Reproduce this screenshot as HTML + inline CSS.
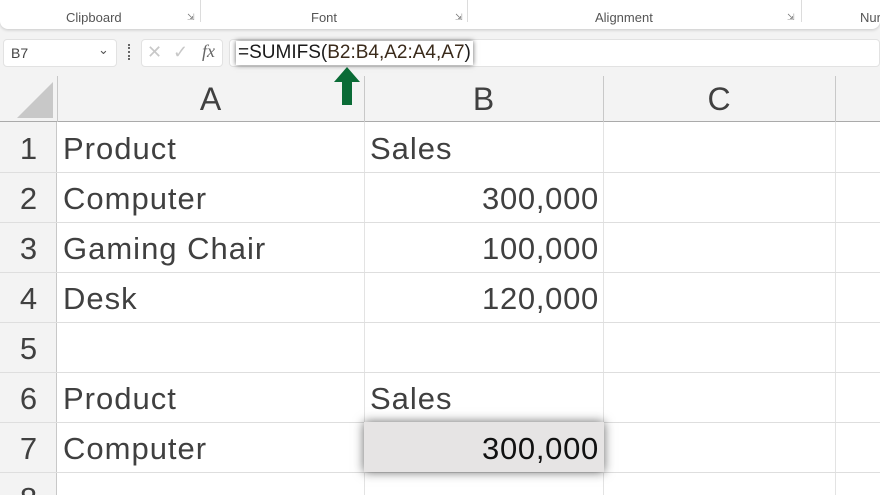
<!DOCTYPE html>
<html><head><style>
*{margin:0;padding:0;box-sizing:border-box}
html,body{width:880px;height:495px;overflow:hidden}
body{background:#f3f3f3;font-family:"Liberation Sans",sans-serif;position:relative;color:#404040}
.abs{position:absolute}
.rib{left:0;top:0;width:880px;height:29px;background:#fff;border-radius:0 0 8px 8px;box-shadow:0 1px 3px rgba(0,0,0,.18)}
.lbl{top:10px;font-size:13px;color:#555}
.sep{top:0;width:1px;height:22px;background:#dcdcdc}
.ln{font-size:9px;color:#777;top:12px}
.box{background:#fff;border:1px solid #e2e2e2;border-radius:4px}
.grid{left:0;top:122px;width:880px;height:373px;background:#fff}
.h{background:#dedede}
.v{background:#e3e3e3}
.cell{font-size:31px;color:#404040;height:50px;line-height:52px;letter-spacing:1px}
.rn{width:57px;text-align:center;font-size:31px;color:#404040;line-height:52px;height:50px;left:0;overflow:hidden}
.col{top:76px;height:46px;line-height:46px;text-align:center;font-size:32px;color:#404040}
</style></head><body>
<div class="abs rib"></div>
<div class="abs lbl" style="left:66px">Clipboard</div>
<div class="abs ln" style="left:187px">⇲</div>
<div class="abs sep" style="left:200px"></div>
<div class="abs lbl" style="left:311px">Font</div>
<div class="abs ln" style="left:455px">⇲</div>
<div class="abs sep" style="left:467px"></div>
<div class="abs lbl" style="left:595px">Alignment</div>
<div class="abs ln" style="left:787px">⇲</div>
<div class="abs sep" style="left:801px"></div>
<div class="abs lbl" style="left:860px;width:20px;overflow:hidden">Nur</div>

<div class="abs box" style="left:3px;top:39px;width:114px;height:28px"></div>
<div class="abs" style="left:11px;top:45px;font-size:14px;color:#444">B7</div>
<div class="abs" style="left:98px;top:42px;font-size:13px;color:#555">⌄</div>
<div class="abs" style="left:128px;top:44px;width:2px;height:16px;border-left:2px dotted #666"></div>
<div class="abs box" style="left:141px;top:39px;width:82px;height:28px"></div>
<div class="abs" style="left:147px;top:42px;font-size:18px;color:#c8c8c8">✕</div>
<div class="abs" style="left:173px;top:42px;font-size:18px;color:#c8c8c8">✓</div>
<div class="abs" style="left:202px;top:41px;font-size:18px;color:#666;font-family:'Liberation Serif',serif;font-style:italic">fx</div>
<div class="abs box" style="left:229px;top:39px;width:651px;height:28px"></div>
<div class="abs" style="left:236px;top:41px;height:24px;padding:0 2px;background:#fff;box-shadow:0 0 5px rgba(0,0,0,.6);font-size:19px;line-height:24px;color:#1a1a1a">=SUMIFS(<span style="color:#3a2a1a">B2:B4,A2:A4,A7</span>)</div>
<svg class="abs" style="left:332px;top:66px" width="30" height="40"><path d="M15 1 L28 16 L20 16 L20 39 L10 39 L10 16 L2 16 Z" fill="#0a6b36"/></svg>

<div class="abs" style="left:0;top:121px;width:880px;height:1px;background:#aaa"></div>
<svg class="abs" style="left:15px;top:80px" width="40" height="40"><path d="M38 2 L38 38 L2 38 Z" fill="#c8c8c8"/></svg>
<div class="abs" style="left:57px;top:76px;width:1px;height:46px;background:#c8c8c8"></div>
<div class="abs" style="left:364px;top:76px;width:1px;height:46px;background:#c8c8c8"></div>
<div class="abs" style="left:603px;top:76px;width:1px;height:46px;background:#c8c8c8"></div>
<div class="abs" style="left:835px;top:76px;width:1px;height:46px;background:#c8c8c8"></div>
<div class="abs col" style="left:57px;width:307px">A</div>
<div class="abs col" style="left:364px;width:239px">B</div>
<div class="abs col" style="left:603px;width:232px">C</div>

<div class="abs grid"></div>
<div class="abs" style="left:0;top:122px;width:57px;height:373px;background:#f3f3f3;border-right:1px solid #c8c8c8"></div>
<div class="abs v" style="left:364px;top:122px;width:1px;height:373px"></div>
<div class="abs v" style="left:603px;top:122px;width:1px;height:373px"></div>
<div class="abs v" style="left:835px;top:122px;width:1px;height:373px"></div>
<div class="abs h" style="left:0;top:172px;width:880px;height:1px"></div>
<div class="abs h" style="left:0;top:222px;width:880px;height:1px"></div>
<div class="abs h" style="left:0;top:272px;width:880px;height:1px"></div>
<div class="abs h" style="left:0;top:322px;width:880px;height:1px"></div>
<div class="abs h" style="left:0;top:372px;width:880px;height:1px"></div>
<div class="abs h" style="left:0;top:422px;width:880px;height:1px"></div>
<div class="abs h" style="left:0;top:472px;width:880px;height:1px"></div>

<div class="abs rn" style="top:123px">1</div>
<div class="abs rn" style="top:173px">2</div>
<div class="abs rn" style="top:223px">3</div>
<div class="abs rn" style="top:273px">4</div>
<div class="abs rn" style="top:323px">5</div>
<div class="abs rn" style="top:373px">6</div>
<div class="abs rn" style="top:423px">7</div>
<div class="abs rn" style="top:473px;height:22px">8</div>

<div class="abs cell" style="left:63px;top:123px">Product</div>
<div class="abs cell" style="left:63px;top:173px">Computer</div>
<div class="abs cell" style="left:63px;top:223px">Gaming Chair</div>
<div class="abs cell" style="left:63px;top:273px">Desk</div>
<div class="abs cell" style="left:63px;top:373px">Product</div>
<div class="abs cell" style="left:63px;top:423px">Computer</div>
<div class="abs cell" style="left:370px;top:123px">Sales</div>
<div class="abs cell" style="left:370px;top:373px">Sales</div>
<div class="abs cell" style="left:364px;top:173px;width:235px;text-align:right;letter-spacing:.7px">300,000</div>
<div class="abs cell" style="left:364px;top:223px;width:235px;text-align:right;letter-spacing:.7px">100,000</div>
<div class="abs cell" style="left:364px;top:273px;width:235px;text-align:right;letter-spacing:.7px">120,000</div>
<div class="abs" style="left:364px;top:422px;width:240px;height:50px;background:#e6e4e4;box-shadow:0 0 10px rgba(0,0,0,.6)"></div>
<div class="abs cell" style="left:364px;top:423px;width:235px;text-align:right;color:#111;letter-spacing:.7px">300,000</div>
</body></html>
